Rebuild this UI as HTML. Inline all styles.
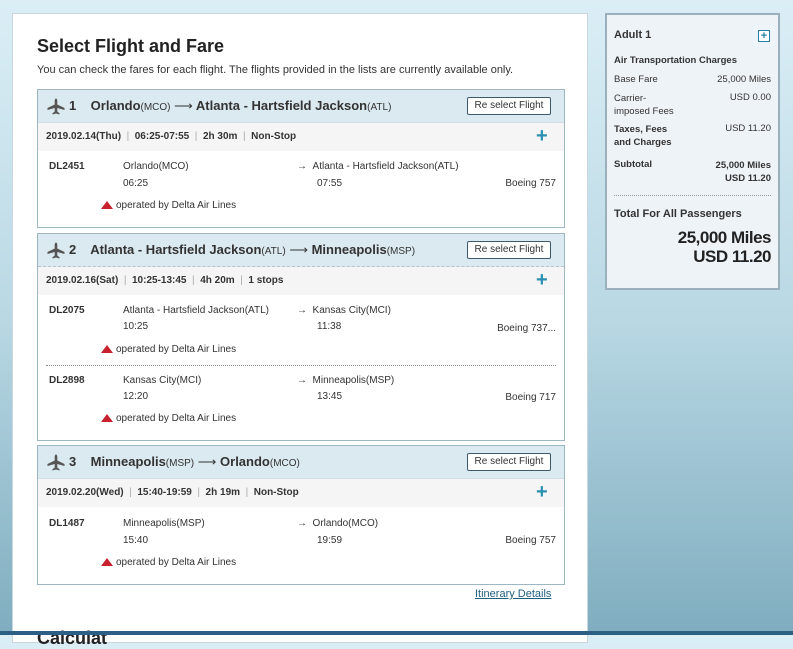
<!DOCTYPE html>
<html><head><meta charset="utf-8"><style>
*{margin:0;padding:0;box-sizing:border-box}
body{width:793px;height:635px;overflow:hidden;position:relative;font-family:"Liberation Sans",sans-serif;color:#333;background:linear-gradient(180deg,#dbeef6 0%,#b9d8e4 50%,#7fadbf 100%)}
.a{position:absolute;white-space:nowrap}
.main{position:absolute;left:12px;top:13px;width:576px;height:630px;background:#fff;border:1px solid #c9d6dc}
.card{position:absolute;left:37px;width:528px;border:1px solid #9db7c2;background:#fff}
.hd{position:absolute;left:0;top:0;right:0;height:33px;background:#dbe9f0;border-bottom:1px solid #d0dde4}
.sub{position:absolute;left:0;top:33px;right:0;height:28px;background:#f5f5f5}
.t{font-size:13px;font-weight:bold;color:#333}
.sm{font-size:10px;font-weight:normal}
.btn{position:absolute;right:13px;top:7px;width:84px;height:18px;border:1px solid #3d5a6a;border-radius:2px;background:#fff;font-size:10px;text-align:center;line-height:16px;color:#333}
.s{font-size:10px;font-weight:bold}
.bar{color:#aaa;font-weight:normal}
.r{font-size:10px;color:#333}
.plus{color:#2a8fb0;font-size:20px;font-weight:bold}
.dl{display:inline-block;width:0;height:0;border-left:6px solid transparent;border-right:6px solid transparent;border-bottom:8px solid #c8202f;margin-right:3px;vertical-align:-1px}
.side{position:absolute;left:605px;top:13px;width:175px;height:277px;background:#eef3f8;border:2px solid #9ab0bc}
.sd{font-size:9.5px}
.pl{position:absolute;left:9px;top:8px}
</style></head><body>
<div class="main"></div>
<div class="a" style="left:37px;top:36px;font-size:18px;font-weight:bold;color:#222">Select Flight and Fare</div>
<div class="a" style="left:37px;top:64px;font-size:11px">You can check the fares for each flight. The flights provided in the lists are currently available only.</div>

<!-- card 1 -->
<div class="card" style="top:89px;height:139px">
 <div class="hd"><svg class="pl" width="18" height="17" viewBox="0 0 18 17"><path d="M9 0.5 C10 0.5 10.3 2 10.3 3.5 V6.5 L17.5 10 V12 L10.3 10 V13.5 L12.5 15.2 V16.5 L9 15.5 L5.5 16.5 V15.2 L7.7 13.5 V10 L0.5 12 V10 L7.7 6.5 V3.5 C7.7 2 8 0.5 9 0.5Z" fill="#555"/></svg><div class="a t" style="left:31px;top:8px">1 &nbsp;&nbsp; Orlando<span class="sm">(MCO)</span> <span style="font-weight:normal">⟶</span> Atlanta - Hartsfield Jackson<span class="sm">(ATL)</span></div><div class="btn">Re select Flight</div></div>
 <div class="sub"><div class="a s" style="left:8px;top:8px">2019.02.14(Thu) <span class="bar">&nbsp;|&nbsp;</span> 06:25-07:55 <span class="bar">&nbsp;|&nbsp;</span> 2h 30m <span class="bar">&nbsp;|&nbsp;</span> Non-Stop</div><div class="a plus" style="left:498px;top:2px">+</div></div>
 <div class="a s" style="left:11px;top:71px">DL2451</div>
 <div class="a r" style="left:85px;top:71px">Orlando(MCO)</div>
 <div class="a r" style="left:85px;top:88px">06:25</div>
 <div class="a r" style="left:259px;top:71px">→ &nbsp;Atlanta - Hartsfield Jackson(ATL)</div>
 <div class="a r" style="left:279px;top:88px">07:55</div>
 <div class="a r" style="right:8px;top:88px">Boeing 757</div>
 <div class="a r" style="left:63px;top:110px"><span class="dl"></span>operated by Delta Air Lines</div>
</div>

<!-- card 2 -->
<div class="card" style="top:233px;height:208px">
 <div class="hd" style="border-bottom:1px dashed #b5c5cf"><svg class="pl" width="18" height="17" viewBox="0 0 18 17"><path d="M9 0.5 C10 0.5 10.3 2 10.3 3.5 V6.5 L17.5 10 V12 L10.3 10 V13.5 L12.5 15.2 V16.5 L9 15.5 L5.5 16.5 V15.2 L7.7 13.5 V10 L0.5 12 V10 L7.7 6.5 V3.5 C7.7 2 8 0.5 9 0.5Z" fill="#555"/></svg><div class="a t" style="left:31px;top:8px">2 &nbsp;&nbsp; Atlanta - Hartsfield Jackson<span class="sm">(ATL)</span> <span style="font-weight:normal">⟶</span> Minneapolis<span class="sm">(MSP)</span></div><div class="btn">Re select Flight</div></div>
 <div class="sub"><div class="a s" style="left:8px;top:8px">2019.02.16(Sat) <span class="bar">&nbsp;|&nbsp;</span> 10:25-13:45 <span class="bar">&nbsp;|&nbsp;</span> 4h 20m <span class="bar">&nbsp;|&nbsp;</span> 1 stops</div><div class="a plus" style="left:498px;top:2px">+</div></div>
 <div class="a s" style="left:11px;top:71px">DL2075</div>
 <div class="a r" style="left:85px;top:71px">Atlanta - Hartsfield Jackson(ATL)</div>
 <div class="a r" style="left:85px;top:87px">10:25</div>
 <div class="a r" style="left:259px;top:71px">→ &nbsp;Kansas City(MCI)</div>
 <div class="a r" style="left:279px;top:87px">11:38</div>
 <div class="a r" style="right:8px;top:89px">Boeing 737...</div>
 <div class="a r" style="left:63px;top:110px"><span class="dl"></span>operated by Delta Air Lines</div>
 <div class="a" style="left:8px;right:8px;top:131px;border-top:1px dotted #888"></div>
 <div class="a s" style="left:11px;top:141px">DL2898</div>
 <div class="a r" style="left:85px;top:141px">Kansas City(MCI)</div>
 <div class="a r" style="left:85px;top:157px">12:20</div>
 <div class="a r" style="left:259px;top:141px">→ &nbsp;Minneapolis(MSP)</div>
 <div class="a r" style="left:279px;top:157px">13:45</div>
 <div class="a r" style="right:8px;top:158px">Boeing 717</div>
 <div class="a r" style="left:63px;top:179px"><span class="dl"></span>operated by Delta Air Lines</div>
</div>

<!-- card 3 -->
<div class="card" style="top:445px;height:140px">
 <div class="hd"><svg class="pl" width="18" height="17" viewBox="0 0 18 17"><path d="M9 0.5 C10 0.5 10.3 2 10.3 3.5 V6.5 L17.5 10 V12 L10.3 10 V13.5 L12.5 15.2 V16.5 L9 15.5 L5.5 16.5 V15.2 L7.7 13.5 V10 L0.5 12 V10 L7.7 6.5 V3.5 C7.7 2 8 0.5 9 0.5Z" fill="#555"/></svg><div class="a t" style="left:31px;top:8px">3 &nbsp;&nbsp; Minneapolis<span class="sm">(MSP)</span> <span style="font-weight:normal">⟶</span> Orlando<span class="sm">(MCO)</span></div><div class="btn">Re select Flight</div></div>
 <div class="sub"><div class="a s" style="left:8px;top:8px">2019.02.20(Wed) <span class="bar">&nbsp;|&nbsp;</span> 15:40-19:59 <span class="bar">&nbsp;|&nbsp;</span> 2h 19m <span class="bar">&nbsp;|&nbsp;</span> Non-Stop</div><div class="a plus" style="left:498px;top:2px">+</div></div>
 <div class="a s" style="left:11px;top:72px">DL1487</div>
 <div class="a r" style="left:85px;top:72px">Minneapolis(MSP)</div>
 <div class="a r" style="left:85px;top:89px">15:40</div>
 <div class="a r" style="left:259px;top:72px">→ &nbsp;Orlando(MCO)</div>
 <div class="a r" style="left:279px;top:89px">19:59</div>
 <div class="a r" style="right:8px;top:89px">Boeing 757</div>
 <div class="a r" style="left:63px;top:111px"><span class="dl"></span>operated by Delta Air Lines</div>
</div>
<div class="a" style="left:475px;top:588px;font-size:11px;color:#1f5e80;text-decoration:underline">Itinerary Details</div>
<div class="a" style="left:37px;top:628px;font-size:18px;font-weight:bold;color:#222">Calculat</div>
<div class="a" style="left:0;top:631px;width:793px;height:4px;background:#2d5f85"></div>

<!-- sidebar -->
<div class="side">
 <div class="a" style="left:7px;top:14px;font-size:11px;font-weight:bold">Adult 1</div>
 <div class="a" style="left:151px;top:15px;width:12px;height:12px;border:1px solid #2a7fa8;color:#2a7fa8;font-size:11px;line-height:10px;text-align:center;font-weight:bold;background:#fff">+</div>
 <div class="a sd" style="left:7px;top:40px;font-weight:bold">Air Transportation Charges</div>
 <div class="a sd" style="left:7px;top:59px">Base Fare</div><div class="a sd" style="right:7px;top:59px">25,000 Miles</div>
 <div class="a sd" style="left:7px;top:77px;line-height:13px">Carrier-<br>imposed Fees</div><div class="a sd" style="right:7px;top:77px">USD 0.00</div>
 <div class="a sd" style="left:7px;top:108px;line-height:13px;font-weight:bold">Taxes, Fees<br>and Charges</div><div class="a sd" style="right:7px;top:108px">USD 11.20</div>
 <div class="a sd" style="left:7px;top:144px;font-weight:bold">Subtotal</div><div class="a sd" style="right:7px;top:144px;line-height:13px;font-weight:bold;text-align:right">25,000 Miles<br>USD 11.20</div>
 <div class="a" style="left:7px;right:7px;top:180px;border-top:1px dotted #999"></div>
 <div class="a" style="left:7px;top:193px;font-size:11px;font-weight:bold">Total For All Passengers</div>
 <div class="a" style="right:7px;top:213px;font-size:17px;line-height:19px;font-weight:bold;text-align:right;color:#222;letter-spacing:-0.5px">25,000 Miles<br>USD 11.20</div>
</div>
</body></html>
